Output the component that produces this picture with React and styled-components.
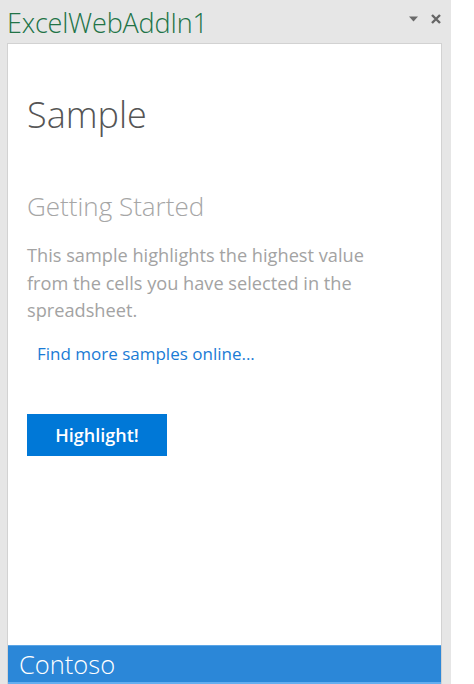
import React from "react";
import styled, { createGlobalStyle } from "styled-components";

const Global = createGlobalStyle`
  html, body { margin: 0; padding: 0; background: #ffffff; }
  body { font-family: "Open Sans", "Noto Sans", sans-serif; }
`;

const Pane = styled.div`
  width: 451px;
  height: 684px;
  background: #e6e6e6;
  display: flex;
  flex-direction: column;
  box-sizing: border-box;
`;

const TitleBar = styled.div`
  height: 43px;
  display: flex;
  align-items: center;
  padding: 0 10px 0 7px;
  box-sizing: border-box;
`;

const Title = styled.div`
  flex: 1;
  color: #217346;
  font-size: 27px;
  font-weight: 300;
  letter-spacing: -0.2px;
  margin-top: 2px;
`;

const Controls = styled.div`
  display: flex;
  align-items: center;
  gap: 13px;
  margin-top: -5px;
`;

const Frame = styled.div`
  flex: 1;
  margin: 0 9px 0 7px;
  background: #ffffff;
  border: 1px solid #d2d2d2;
  border-bottom: none;
  display: flex;
  flex-direction: column;
  box-sizing: border-box;
`;

const Content = styled.div`
  flex: 1;
  padding: 46px 20px 0 19px;
  display: flex;
  flex-direction: column;
`;

const Heading = styled.h1`
  margin: 0;
  font-size: 36px;
  font-weight: 300;
  color: #555555;
  line-height: 50px;
`;

const SubHeading = styled.h2`
  margin: 48px 0 0;
  font-size: 26px;
  font-weight: 300;
  color: #a6a6a6;
  line-height: 36px;
`;

const Body = styled.p`
  margin: 18px 0 0;
  max-width: 362px;
  font-size: 18.2px;
  font-weight: 400;
  color: #a3a3a3;
  line-height: 27.5px;
`;

const Link = styled.a`
  margin: 17px 0 0 10px;
  font-size: 17px;
  color: #1a7bd5;
  text-decoration: none;
  line-height: 24px;
`;

const Button = styled.button`
  margin-top: 48px;
  width: 140px;
  height: 42px;
  background: #0078d7;
  border: none;
  color: #ffffff;
  font-family: "Open Sans", "Noto Sans", sans-serif;
  font-size: 18px;
  font-weight: 600;
  padding: 0;
  cursor: pointer;
`;

const Footer = styled.div`
  height: 39px;
  background: #2b87d8;
  border-top: 1px solid #5aa5e6;
  border-bottom: 2px solid #63aef0;
  display: flex;
  align-items: center;
  padding-left: 11px;
  box-sizing: border-box;
  color: #ffffff;
  font-size: 25.5px;
  font-weight: 300;
`;

export default function App() {
  return (
    <>
      <Global />
      <Pane>
        <TitleBar>
          <Title>ExcelWebAddIn1</Title>
          <Controls>
            <svg width="9" height="6" viewBox="0 0 9 6">
              <path d="M0 0.5 H9 L4.5 5.5 Z" fill="#6a6a6a" />
            </svg>
            <svg width="10" height="10" viewBox="0 0 10 10">
              <path d="M1 1 L9 9 M9 1 L1 9" stroke="#666" strokeWidth="2.4" />
            </svg>
          </Controls>
        </TitleBar>
        <Frame>
          <Content>
            <Heading>Sample</Heading>
            <SubHeading>Getting Started</SubHeading>
            <Body>
              This sample highlights the highest value from the cells you have selected in the spreadsheet.
            </Body>
            <Link href="#">Find more samples online...</Link>
            <div>
              <Button>Highlight!</Button>
            </div>
          </Content>
          <Footer>Contoso</Footer>
        </Frame>
      </Pane>
    </>
  );
}
